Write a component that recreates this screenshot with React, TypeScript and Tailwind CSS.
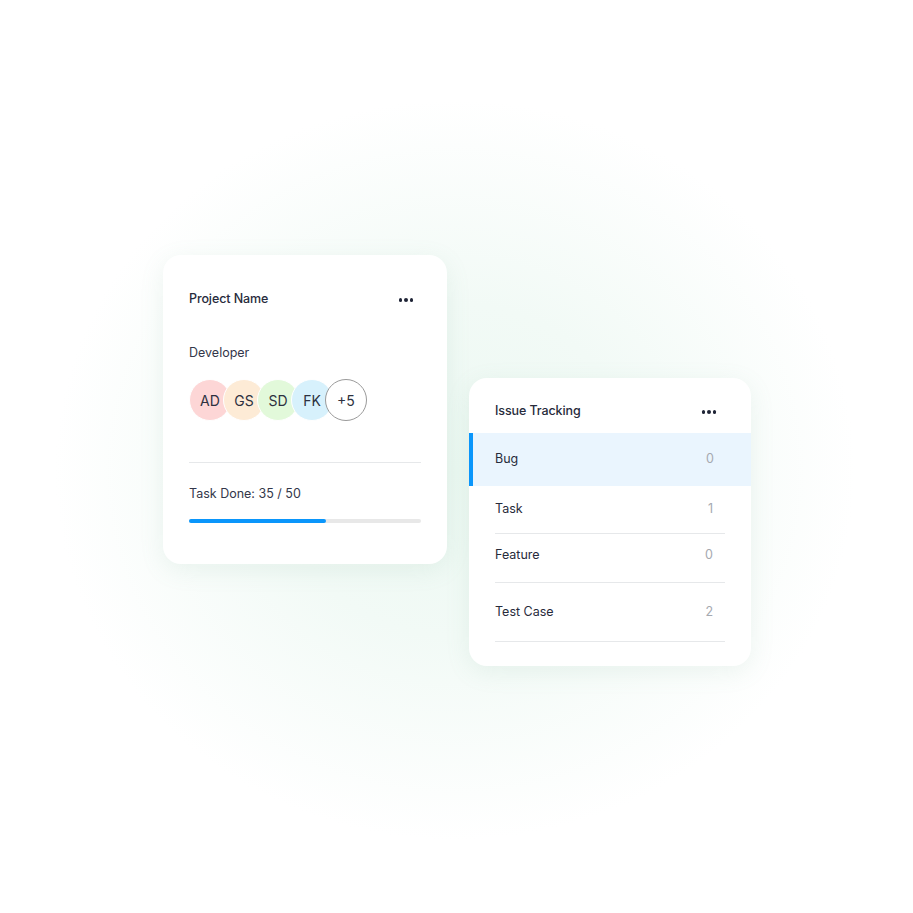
import type { ReactNode } from "react"

const font = { fontFamily: "Inter, 'Noto Sans', sans-serif" }

function Dots() {
  return (
    <div className="flex items-center gap-[2px]">
      <span className="size-[3.5px] rounded-full bg-[#1f2436]" />
      <span className="size-[3.5px] rounded-full bg-[#1f2436]" />
      <span className="size-[3.5px] rounded-full bg-[#1f2436]" />
    </div>
  )
}

const avatars = [
  { label: "AD", bg: "bg-[#fdd6d6]" },
  { label: "GS", bg: "bg-[#fdebd6]" },
  { label: "SD", bg: "bg-[#e2f9da]" },
  { label: "FK", bg: "bg-[#d7f1fc]" },
]

function Card({ children, className }: { children: ReactNode; className?: string }) {
  return (
    <div
      className={`rounded-[18px] bg-white shadow-[0_6px_24px_rgba(120,170,150,0.12)] ${className ?? ""}`}
    >
      {children}
    </div>
  )
}

const issues = [
  { name: "Bug", count: 0 },
  { name: "Task", count: 1 },
  { name: "Feature", count: 0 },
  { name: "Test Case", count: 2 },
]

export default function App() {
  return (
    <div
      style={font}
      className="flex h-[913px] w-[913px] items-start gap-[22px] bg-[radial-gradient(ellipse_400px_370px_at_455px_470px,#ecf8f2_0%,#f2faf6_45%,#ffffff_100%)] pl-[163px] pt-[255px] text-[#272b3b]"
    >
      {/* Project card */}
      <Card className="flex h-[309px] w-[284px] flex-col px-[26px] pt-[34px]">
        <div className="flex h-[20px] items-center justify-between">
          <span className="text-[12.5px] font-medium tracking-[-0.1px]">Project Name</span>
          <div className="mr-[8px] mt-[2px]">
            <Dots />
          </div>
        </div>
        <div className="mt-[34px] flex h-[20px] items-center text-[12.5px] text-[#33374a]">Developer</div>
        <div className="mt-[16px] flex">
          {avatars.map((a, i) => (
            <div
              key={a.label}
              className={`flex size-[42px] items-center justify-center rounded-full border border-white text-[14px] text-[#2d3140] ${a.bg} ${i > 0 ? "-ml-[8px]" : ""}`}
            >
              {a.label}
            </div>
          ))}
          <div className="-ml-[8px] flex size-[42px] items-center justify-center rounded-full border border-[#9a9a9a] bg-white text-[14px] text-[#2d3140]">
            +5
          </div>
        </div>
        <div className="mt-[41px] h-px bg-[#e6e8ea]" />
        <div className="mt-[21px] flex h-[20px] items-center text-[12.5px] text-[#33374a]">Task Done: 35 / 50</div>
        <div className="mt-[15px] h-[4px] w-full rounded-full bg-[#e8e8e8]">
          <div className="h-full w-[59%] rounded-full bg-[#0a96fb]" />
        </div>
      </Card>

      {/* Issue tracking card */}
      <Card className="mt-[123px] flex h-[288px] w-[282px] flex-col overflow-hidden pt-[23px]">
        <div className="flex h-[20px] items-center justify-between px-[26px]">
          <span className="text-[12.5px] font-medium tracking-[-0.1px]">Issue Tracking</span>
          <div className="mr-[9px] mt-[2px]">
            <Dots />
          </div>
        </div>
        <div className="mt-[12px] flex h-[53px] items-center justify-between border-l-4 border-[#0a96fb] bg-[#eaf5fe] pl-[22px] pr-[37px]">
          <span className="text-[12.5px]">{issues[0].name}</span>
          <span className="text-[12.5px] text-[#a6a9b0]">{issues[0].count}</span>
        </div>
        <div className="mx-[26px] flex h-[48px] items-center justify-between border-b border-[#e6e8ea] pr-[12px]">
          <span className="text-[12.5px]">{issues[1].name}</span>
          <span className="text-[12.5px] text-[#a6a9b0]">{issues[1].count}</span>
        </div>
        <div className="mx-[26px] flex h-[49px] items-center justify-between border-b border-[#e6e8ea] pb-[6px] pr-[12px]">
          <span className="text-[12.5px]">{issues[2].name}</span>
          <span className="text-[12.5px] text-[#a6a9b0]">{issues[2].count}</span>
        </div>
        <div className="mx-[26px] flex h-[59px] items-center justify-between border-b border-[#e6e8ea] pr-[12px]">
          <span className="text-[12.5px]">{issues[3].name}</span>
          <span className="text-[12.5px] text-[#a6a9b0]">{issues[3].count}</span>
        </div>
      </Card>
    </div>
  )
}
